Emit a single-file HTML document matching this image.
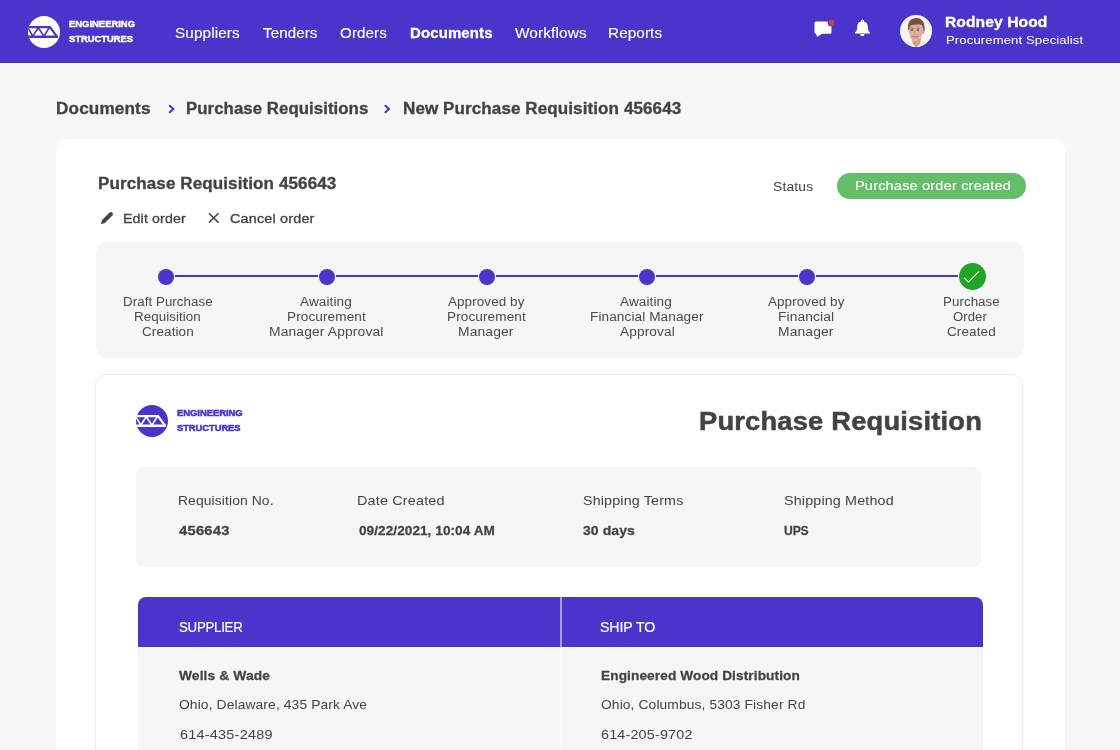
<!DOCTYPE html>
<html><head><meta charset="utf-8">
<style>
html,body{margin:0;padding:0}
body{width:1120px;height:750px;overflow:hidden;background:#F7F7F7;position:relative;font-family:"Liberation Sans",sans-serif}
.a{position:absolute}
.t{position:absolute;white-space:nowrap;transform-origin:0 0;font-family:"Liberation Sans",sans-serif}
</style></head><body>
<!-- nav -->
<div class="a" style="left:0;top:0;width:1120px;height:63px;background:#4A35CB"></div>
<svg class="a" style="left:28px;top:15.7px" width="32" height="32" viewBox="0 0 32 32">
 <defs><clipPath id="c1"><circle cx="16" cy="16" r="16"/></clipPath></defs>
 <circle cx="16" cy="16" r="16" fill="#fff"/>
 <g clip-path="url(#c1)" stroke="#4A35CB" fill="none">
  <path d="M-1 11.1H22.3" stroke-width="2.4"/>
  <path d="M-1 20.8H30" stroke-width="2.4"/>
  <path d="M21.5 10.3L29.5 21.4" stroke-width="2.2"/>
  <path d="M0 11.8L4.8 20.2L10.3 11.8L15.9 20.2L21.2 11.8" stroke-width="1.6"/>
 </g>
</svg>
<!-- chat icon -->
<svg class="a" style="left:800px;top:10px" width="80" height="40" viewBox="800 10 80 40">
 <path d="M816 21.5H830a1.5 1.5 0 0 1 1.5 1.5V32.2a1.5 1.5 0 0 1-1.5 1.5H822L817.3 37L815.9 33.7A1.5 1.5 0 0 1 814.5 32.2V23a1.5 1.5 0 0 1 1.5-1.5Z" fill="#fff"/>
 <circle cx="831.5" cy="22.4" r="3.9" fill="#4A35CB"/>
 <circle cx="831.5" cy="22.4" r="2.8" fill="#CB443E"/>
 <path d="M855 33.5H870V32.4Q868 31.2 867.8 28.2V26.8Q867.8 21.5 862.5 21.5Q857.2 21.5 857.2 26.8V28.2Q857 31.2 855 32.4Z" fill="#fff"/>
 <path d="M862.5 19.6a1.6 1.6 0 1 1 0 3.2a1.6 1.6 0 1 1 0-3.2Zm0 1a0.6 0.6 0 1 0 0 1.2a0.6 0.6 0 1 0 0-1.2Z" fill="#fff" fill-rule="evenodd"/>
 <path d="M860 34H864.6L863.6 35.9H861Z" fill="#fff"/>
</svg>
<!-- avatar -->
<svg class="a" style="left:900.3px;top:14.6px" width="32" height="32" viewBox="0 0 32 32">
 <defs><clipPath id="av"><circle cx="16" cy="16" r="16"/></clipPath>
 <filter id="bl" x="-10%" y="-10%" width="120%" height="120%"><feGaussianBlur stdDeviation="0.45"/></filter></defs>
 <g clip-path="url(#av)">
  <rect width="32" height="32" fill="#F5F5F6"/>
  <g filter="url(#bl)">
  <path d="M20 0L32 0L32 14Z" fill="#ECEDF0"/>
  <path d="M3 33Q5 27.5 12 26L20.5 26Q27 27.5 29 33Z" fill="#F3F1EF"/>
  <path d="M12.2 22L20.8 22L20.6 28.5Q16.5 33 12.6 28.5Z" fill="#D9A08E"/>
  <path d="M12.6 28L16.3 32.5L20 28Z" fill="#D49A86"/>
  <ellipse cx="22.8" cy="16.8" rx="1.5" ry="2.2" fill="#CF9A88"/>
  <path d="M8.9 13Q8.9 26.3 15.8 26.5Q22.6 26.3 22.8 13Q22.3 9.2 16 9.2Q9.4 9.2 8.9 13Z" fill="#DFAF9E"/>
  <path d="M8 15Q7.2 3 16.5 3.1Q25.2 3.3 24.7 15.8L23.6 16Q22.6 11.5 21.8 10.2Q19.5 9.2 16 9.8Q12.5 9.5 10.6 10.5Q9.3 12 8.9 15.2Z" fill="#755542"/>
  <path d="M10.3 13.4Q12 12.6 13.7 13.4" stroke="#8A6656" stroke-width="0.8" fill="none"/><ellipse cx="12" cy="15.1" rx="1.3" ry="0.8" fill="#5A4548"/>
  <path d="M16.2 13.4Q17.9 12.6 19.6 13.4" stroke="#8A6656" stroke-width="0.8" fill="none"/><ellipse cx="17.9" cy="15.1" rx="1.3" ry="0.8" fill="#5A4548"/>
  <path d="M15 16.5L14.5 19.4Q15.5 19.9 16.4 19.4" stroke="#C48E7E" stroke-width="0.6" fill="none"/>
  <path d="M12.4 21.3Q15.3 23.2 18.8 21.3" stroke="#B07064" stroke-width="1" fill="none"/>
  </g>
 </g>
</svg>
<!-- breadcrumb chevrons -->
<svg class="a" style="left:160px;top:100px" width="240" height="20" viewBox="160 100 240 20">
 <path d="M169.8 105.8L173.4 109L169.8 112.2" stroke="#4A35CB" stroke-width="2.1" fill="none" stroke-linecap="round" stroke-linejoin="round"/>
 <path d="M385.4 105.8L389 109L385.4 112.2" stroke="#4A35CB" stroke-width="2.1" fill="none" stroke-linecap="round" stroke-linejoin="round"/>
</svg>
<!-- page card -->
<div class="a" style="left:56px;top:139px;width:1009px;height:700px;background:#fff;border-radius:12px"></div>
<!-- pencil + x -->
<svg class="a" style="left:90px;top:200px" width="140" height="30" viewBox="90 200 140 30">
 <path d="M109.59 212.59A2 2 0 0 1 112.41 215.41L104.91 222.91L100.8 224.2L102.09 220.09Z" fill="#444"/>
 <path d="M209 213.2L218.5 222.6M218.5 213.2L209 222.6" stroke="#444" stroke-width="1.5" fill="none"/>
</svg>
<!-- status pill -->
<div class="a" style="left:837px;top:173px;width:189px;height:26px;border-radius:13px;background:#63BE67"></div>
<!-- stepper -->
<div class="a" style="left:96px;top:242px;width:928px;height:116px;border-radius:12px;background:#F6F6F6"></div>
<div class="a" style="left:174px;top:275px;width:784px;height:2px;background:#4A35CB"></div>
<div class="a" style="left:158.3px;top:269px;width:16px;height:16px;border-radius:50%;background:#4A35CB;box-shadow:0 0 0 1px #F6F6F6"></div>
<div class="a" style="left:319px;top:269px;width:16px;height:16px;border-radius:50%;background:#4A35CB;box-shadow:0 0 0 1px #F6F6F6"></div>
<div class="a" style="left:479px;top:269px;width:16px;height:16px;border-radius:50%;background:#4A35CB;box-shadow:0 0 0 1px #F6F6F6"></div>
<div class="a" style="left:639px;top:269px;width:16px;height:16px;border-radius:50%;background:#4A35CB;box-shadow:0 0 0 1px #F6F6F6"></div>
<div class="a" style="left:799px;top:269px;width:16px;height:16px;border-radius:50%;background:#4A35CB;box-shadow:0 0 0 1px #F6F6F6"></div>
<svg class="a" style="left:958px;top:261.8px" width="29" height="29" viewBox="-1 -1 29 29">
 <circle cx="13.5" cy="13.5" r="14.5" fill="#F6F6F6"/><circle cx="13.5" cy="13.5" r="13.5" fill="#21A529"/>
 <path d="M5.1 14.6L9.4 19.1L19.8 8.3" stroke="#fff" stroke-width="1.05" fill="none"/>
</svg>
<!-- doc card -->
<div class="a" style="left:95px;top:374px;width:928px;height:500px;box-sizing:border-box;border:1px solid #E7E9EF;border-radius:12px;background:#fff"></div>
<svg class="a" style="left:136px;top:404.7px" width="32" height="32" viewBox="0 0 32 32">
 <defs><clipPath id="c2"><circle cx="16" cy="16" r="16"/></clipPath></defs>
 <circle cx="16" cy="16" r="16" fill="#4A35CB"/>
 <g clip-path="url(#c2)" stroke="#fff" fill="none">
  <path d="M-1 11.1H22.3" stroke-width="2.4"/>
  <path d="M-1 20.8H30" stroke-width="2.4"/>
  <path d="M21.5 10.3L29.5 21.4" stroke-width="2.2"/>
  <path d="M0 11.8L4.8 20.2L10.3 11.8L15.9 20.2L21.2 11.8" stroke-width="1.6"/>
 </g>
</svg>
<div class="a" style="left:136px;top:467px;width:845px;height:100px;border-radius:8px;background:#F6F6F6"></div>
<!-- table -->
<div class="a" style="left:138px;top:597px;width:845px;height:50px;border-radius:8px 8px 0 0;background:#4A35CB"></div>
<div class="a" style="left:138px;top:647px;width:845px;height:200px;background:#F6F6F6"></div>
<div class="a" style="left:560px;top:597px;width:2px;height:50px;background:#A59BE6"></div>
<div class="a" style="left:560px;top:647px;width:2px;height:200px;background:#FAFAFA"></div>
<span class="t" style="left:69.40px;top:18.80px;font-size:9.5px;line-height:9.5px;color:#FFFFFF;letter-spacing:-0.008px;transform:scaleX(0.9933);font-weight:700;-webkit-text-stroke:0.450px #FFFFFF">ENGINEERING</span>
<span class="t" style="left:69.40px;top:33.80px;font-size:9.5px;line-height:9.5px;color:#FFFFFF;letter-spacing:-0.017px;transform:scaleX(0.9871);font-weight:700;-webkit-text-stroke:0.450px #FFFFFF">STRUCTURES</span>
<span class="t" style="left:175.10px;top:26.00px;font-size:14px;line-height:14px;color:#FFFFFF;letter-spacing:0.109px;transform:scaleX(1.0923);-webkit-text-stroke:0.120px #FFFFFF">Suppliers</span>
<span class="t" style="left:263.40px;top:26.00px;font-size:14px;line-height:14px;color:#FFFFFF;letter-spacing:0.106px;transform:scaleX(1.0784);-webkit-text-stroke:0.120px #FFFFFF">Tenders</span>
<span class="t" style="left:340.40px;top:26.00px;font-size:14px;line-height:14px;color:#FFFFFF;letter-spacing:0.112px;transform:scaleX(1.0797);-webkit-text-stroke:0.120px #FFFFFF">Orders</span>
<span class="t" style="left:410.10px;top:26.00px;font-size:14px;line-height:14px;color:#FFFFFF;letter-spacing:0.110px;transform:scaleX(1.0695);font-weight:700;-webkit-text-stroke:0.280px #FFFFFF">Documents</span>
<span class="t" style="left:515.20px;top:26.00px;font-size:14px;line-height:14px;color:#FFFFFF;letter-spacing:0.125px;transform:scaleX(1.0964);-webkit-text-stroke:0.120px #FFFFFF">Workflows</span>
<span class="t" style="left:608.21px;top:26.00px;font-size:14px;line-height:14px;color:#FFFFFF;letter-spacing:0.114px;transform:scaleX(1.0881);-webkit-text-stroke:0.120px #FFFFFF">Reports</span>
<span class="t" style="left:944.96px;top:14.30px;font-size:15px;line-height:15px;color:#FFFFFF;letter-spacing:0.069px;transform:scaleX(1.0421);font-weight:700;-webkit-text-stroke:0.300px #FFFFFF">Rodney Hood</span>
<span class="t" style="left:946.00px;top:33.50px;font-size:11.6px;line-height:11.6px;color:#FFFFFF;letter-spacing:0.114px;transform:scaleX(1.1276)">Procurement Specialist</span>
<span class="t" style="left:55.63px;top:101.00px;font-size:16px;line-height:16px;color:#434343;letter-spacing:0.127px;transform:scaleX(1.0717);font-weight:700;-webkit-text-stroke:0.320px #434343">Documents</span>
<span class="t" style="left:186.45px;top:101.00px;font-size:16px;line-height:16px;color:#434343;letter-spacing:0.069px;transform:scaleX(1.0481);font-weight:700;-webkit-text-stroke:0.320px #434343">Purchase Requisitions</span>
<span class="t" style="left:402.64px;top:101.00px;font-size:16px;line-height:16px;color:#434343;letter-spacing:0.091px;transform:scaleX(1.0637);font-weight:700;-webkit-text-stroke:0.320px #434343">New Purchase Requisition 456643</span>
<span class="t" style="left:97.84px;top:176.00px;font-size:16px;line-height:16px;color:#434343;letter-spacing:0.091px;transform:scaleX(1.0646);font-weight:700;-webkit-text-stroke:0.320px #434343">Purchase Requisition 456643</span>
<span class="t" style="left:122.97px;top:213.00px;font-size:12.5px;line-height:12.5px;color:#434343;letter-spacing:0.123px;transform:scaleX(1.1342);-webkit-text-stroke:0.300px #434343">Edit order</span>
<span class="t" style="left:229.70px;top:213.00px;font-size:12.5px;line-height:12.5px;color:#434343;letter-spacing:0.151px;transform:scaleX(1.1524);-webkit-text-stroke:0.300px #434343">Cancel order</span>
<span class="t" style="left:773.40px;top:181.20px;font-size:12.5px;line-height:12.5px;color:#434343;letter-spacing:0.125px;transform:scaleX(1.1114)">Status</span>
<span class="t" style="left:854.91px;top:180.00px;font-size:12.2px;line-height:12.2px;color:#FFFFFF;letter-spacing:0.168px;transform:scaleX(1.1896);-webkit-text-stroke:0.150px #FFFFFF">Purchase order created</span>
<span class="t" style="left:123.14px;top:296.00px;font-size:12.5px;line-height:12.5px;color:#4A4A4A;letter-spacing:0.067px;transform:scaleX(1.0638)">Draft Purchase</span>
<span class="t" style="left:134.33px;top:311.00px;font-size:12.5px;line-height:12.5px;color:#4A4A4A;letter-spacing:0.068px;transform:scaleX(1.0672)">Requisition</span>
<span class="t" style="left:142.40px;top:326.00px;font-size:12.5px;line-height:12.5px;color:#4A4A4A;letter-spacing:0.089px;transform:scaleX(1.0810)">Creation</span>
<span class="t" style="left:299.50px;top:296.00px;font-size:12.5px;line-height:12.5px;color:#4A4A4A;letter-spacing:0.093px;transform:scaleX(1.0854)">Awaiting</span>
<span class="t" style="left:287.01px;top:311.00px;font-size:12.5px;line-height:12.5px;color:#4A4A4A;letter-spacing:0.098px;transform:scaleX(1.0851)">Procurement</span>
<span class="t" style="left:269.39px;top:326.00px;font-size:12.5px;line-height:12.5px;color:#4A4A4A;letter-spacing:0.116px;transform:scaleX(1.1087)">Manager Approval</span>
<span class="t" style="left:448.10px;top:296.00px;font-size:12.5px;line-height:12.5px;color:#4A4A4A;letter-spacing:0.087px;transform:scaleX(1.0751)">Approved by</span>
<span class="t" style="left:446.51px;top:311.00px;font-size:12.5px;line-height:12.5px;color:#4A4A4A;letter-spacing:0.098px;transform:scaleX(1.0851)">Procurement</span>
<span class="t" style="left:458.20px;top:326.00px;font-size:12.5px;line-height:12.5px;color:#4A4A4A;letter-spacing:0.134px;transform:scaleX(1.1046)">Manager</span>
<span class="t" style="left:619.50px;top:296.00px;font-size:12.5px;line-height:12.5px;color:#4A4A4A;letter-spacing:0.093px;transform:scaleX(1.0854)">Awaiting</span>
<span class="t" style="left:589.91px;top:311.00px;font-size:12.5px;line-height:12.5px;color:#4A4A4A;letter-spacing:0.091px;transform:scaleX(1.0880)">Financial Manager</span>
<span class="t" style="left:620.30px;top:326.00px;font-size:12.5px;line-height:12.5px;color:#4A4A4A;letter-spacing:0.105px;transform:scaleX(1.0935)">Approval</span>
<span class="t" style="left:768.10px;top:296.00px;font-size:12.5px;line-height:12.5px;color:#4A4A4A;letter-spacing:0.087px;transform:scaleX(1.0751)">Approved by</span>
<span class="t" style="left:778.20px;top:311.00px;font-size:12.5px;line-height:12.5px;color:#4A4A4A;letter-spacing:0.099px;transform:scaleX(1.1031)">Financial</span>
<span class="t" style="left:778.20px;top:326.00px;font-size:12.5px;line-height:12.5px;color:#4A4A4A;letter-spacing:0.134px;transform:scaleX(1.1046)">Manager</span>
<span class="t" style="left:943.14px;top:296.00px;font-size:12.5px;line-height:12.5px;color:#4A4A4A;letter-spacing:0.077px;transform:scaleX(1.0630)">Purchase</span>
<span class="t" style="left:953.30px;top:311.00px;font-size:12.5px;line-height:12.5px;color:#4A4A4A;letter-spacing:0.065px;transform:scaleX(1.0484)">Order</span>
<span class="t" style="left:947.30px;top:326.00px;font-size:12.5px;line-height:12.5px;color:#4A4A4A;letter-spacing:0.097px;transform:scaleX(1.0798)">Created</span>
<span class="t" style="left:177.30px;top:408.00px;font-size:9.8px;line-height:9.8px;color:#4A35CB;letter-spacing:-0.046px;transform:scaleX(0.9634);font-weight:700;-webkit-text-stroke:0.550px #4A35CB">ENGINEERING</span>
<span class="t" style="left:177.30px;top:423.00px;font-size:9.8px;line-height:9.8px;color:#4A35CB;letter-spacing:-0.059px;transform:scaleX(0.9570);font-weight:700;-webkit-text-stroke:0.550px #4A35CB">STRUCTURES</span>
<span class="t" style="left:699.11px;top:408.50px;font-size:25px;line-height:25px;color:#434343;letter-spacing:0.196px;transform:scaleX(1.0908);font-weight:700;-webkit-text-stroke:0.500px #434343">Purchase Requisition</span>
<span class="t" style="left:178.20px;top:495.00px;font-size:12.6px;line-height:12.6px;color:#434343;letter-spacing:0.097px;transform:scaleX(1.1013)">Requisition No.</span>
<span class="t" style="left:357.36px;top:495.00px;font-size:12.6px;line-height:12.6px;color:#434343;letter-spacing:0.149px;transform:scaleX(1.1438)">Date Created</span>
<span class="t" style="left:583.20px;top:495.00px;font-size:12.6px;line-height:12.6px;color:#434343;letter-spacing:0.139px;transform:scaleX(1.1346)">Shipping Terms</span>
<span class="t" style="left:784.20px;top:495.00px;font-size:12.6px;line-height:12.6px;color:#434343;letter-spacing:0.142px;transform:scaleX(1.1356)">Shipping Method</span>
<span class="t" style="left:179.30px;top:523.80px;font-size:13px;line-height:13px;color:#434343;letter-spacing:0.186px;transform:scaleX(1.1389);font-weight:700;-webkit-text-stroke:0.260px #434343">456643</span>
<span class="t" style="left:358.50px;top:523.80px;font-size:13px;line-height:13px;color:#434343;letter-spacing:0.053px;transform:scaleX(1.0461);font-weight:700;-webkit-text-stroke:0.260px #434343">09/22/2021, 10:04 AM</span>
<span class="t" style="left:583.20px;top:523.80px;font-size:13px;line-height:13px;color:#434343;letter-spacing:0.096px;transform:scaleX(1.0739);font-weight:700;-webkit-text-stroke:0.260px #434343">30 days</span>
<span class="t" style="left:784.20px;top:523.80px;font-size:13px;line-height:13px;color:#434343;letter-spacing:-0.165px;transform:scaleX(0.9353);font-weight:700;-webkit-text-stroke:0.260px #434343">UPS</span>
<span class="t" style="left:179.40px;top:619.00px;font-size:15.3px;line-height:15.3px;color:#FFFFFF;letter-spacing:-0.295px;transform:scaleX(0.8661);-webkit-text-stroke:0.200px #FFFFFF">SUPPLIER</span>
<span class="t" style="left:600.20px;top:619.00px;font-size:15.3px;line-height:15.3px;color:#FFFFFF;letter-spacing:-0.141px;transform:scaleX(0.9273);-webkit-text-stroke:0.200px #FFFFFF">SHIP TO</span>
<span class="t" style="left:179.40px;top:670.00px;font-size:12.6px;line-height:12.6px;color:#434343;letter-spacing:0.113px;transform:scaleX(1.0937);font-weight:700;-webkit-text-stroke:0.252px #434343">Wells &amp; Wade</span>
<span class="t" style="left:601.30px;top:670.00px;font-size:12.6px;line-height:12.6px;color:#434343;letter-spacing:0.091px;transform:scaleX(1.0840);font-weight:700;-webkit-text-stroke:0.252px #434343">Engineered Wood Distribution</span>
<span class="t" style="left:179.40px;top:699.40px;font-size:12.6px;line-height:12.6px;color:#434343;letter-spacing:0.099px;transform:scaleX(1.0986)">Ohio, Delaware, 435 Park Ave</span>
<span class="t" style="left:601.30px;top:699.40px;font-size:12.6px;line-height:12.6px;color:#434343;letter-spacing:0.099px;transform:scaleX(1.0969)">Ohio, Columbus, 5303 Fisher Rd</span>
<span class="t" style="left:180.30px;top:728.80px;font-size:12.6px;line-height:12.6px;color:#434343;letter-spacing:0.167px;transform:scaleX(1.1526)">614-435-2489</span>
<span class="t" style="left:601.30px;top:728.80px;font-size:12.6px;line-height:12.6px;color:#434343;letter-spacing:0.155px;transform:scaleX(1.1406)">614-205-9702</span>
</body></html>
